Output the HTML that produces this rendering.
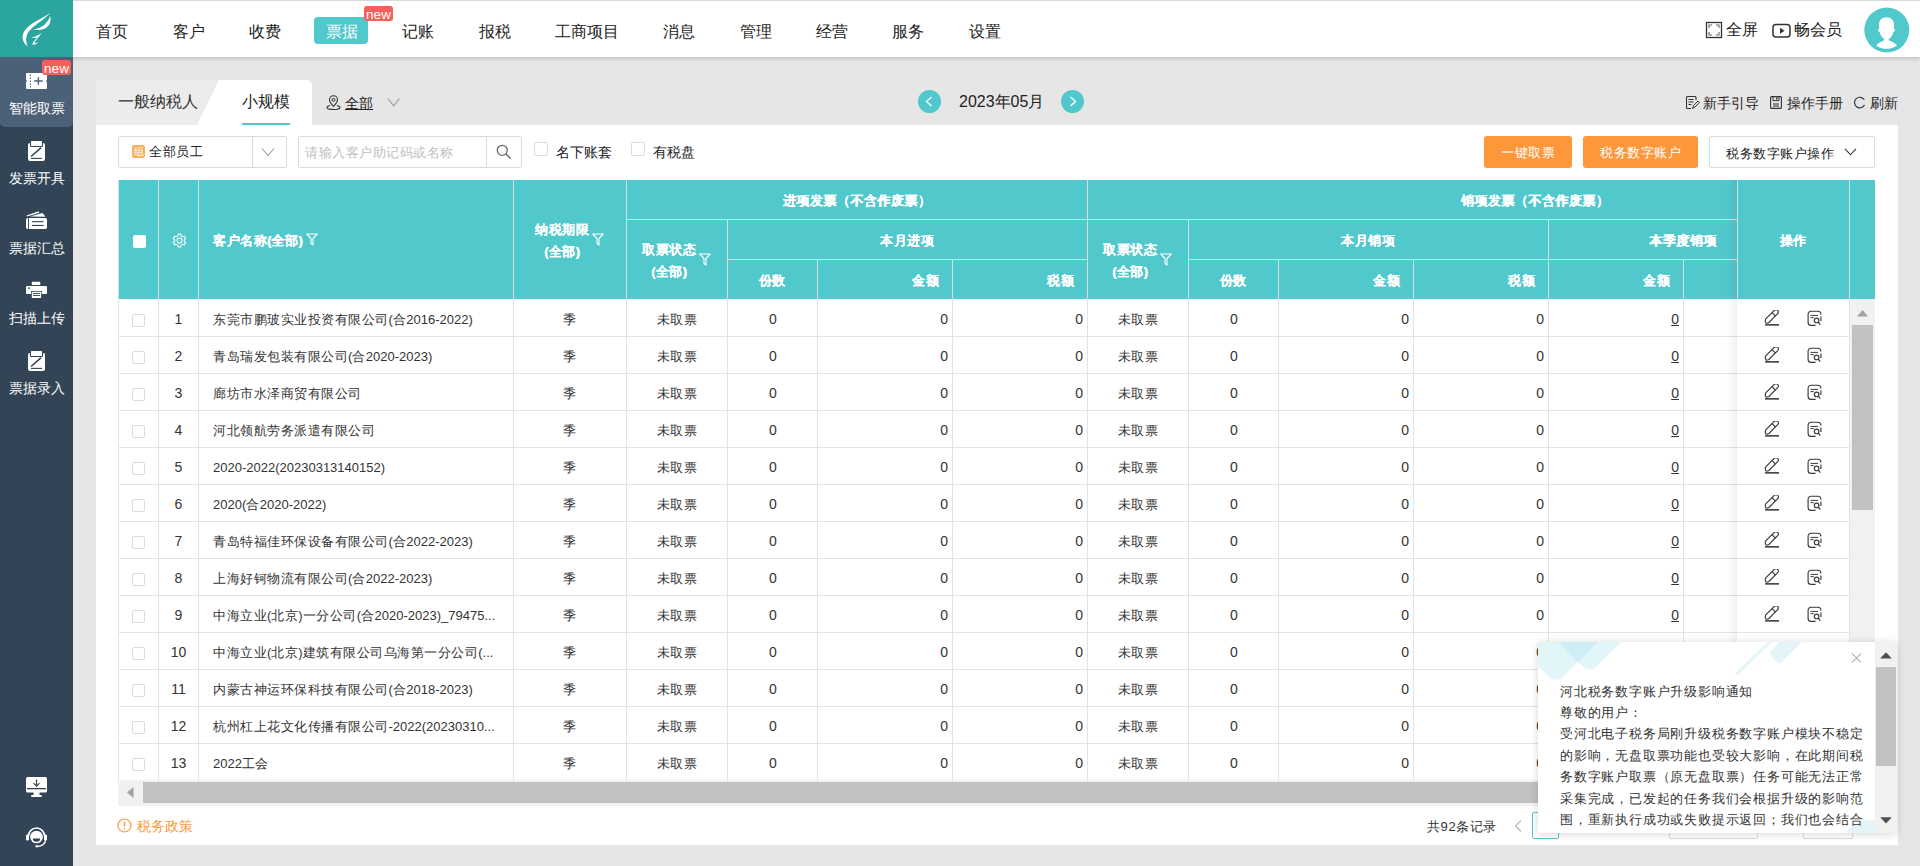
<!DOCTYPE html><html><head><meta charset="utf-8"><style>
*{box-sizing:border-box;margin:0;padding:0}
html,body{width:1920px;height:866px;overflow:hidden;background:#e6e6e6;font-family:"Liberation Sans",sans-serif;color:#333}
.a{position:absolute}
.c{letter-spacing:0.5px}
#top{position:absolute;left:0;top:0;width:1920px;height:57px;background:#fff;border-top:1px solid #d9d9d9;box-shadow:0 2px 4px rgba(0,0,0,0.16);z-index:5}
#side{position:absolute;left:0;top:0;width:73px;height:866px;background:#324455;z-index:6}
#logo{position:absolute;left:0;top:0;width:73px;height:57px;background:#2aa59f}
.nav{position:absolute;top:19px;font-size:16px;line-height:24px;color:#222;white-space:nowrap}
.sitem{position:absolute;left:0;width:73px;height:70px;color:#fff;font-size:14px;text-align:center}
.sitem .t{position:absolute;left:0;width:73px;top:43px;line-height:16px;font-size:14px}
.badge{position:absolute;background:#f7605a;color:#fff;font-size:13.5px;line-height:17.5px;height:15px;border-radius:3px;text-align:center;overflow:hidden}
.hd{position:absolute;background:#50c8cc;color:#fff;font-weight:bold;font-size:13px;text-shadow:0.45px 0 0 #fff}
.hl{position:absolute;background:#d9dddd}
.bl{position:absolute;background:#e3e3e3}
.cell{position:absolute;font-size:13px;line-height:16px;white-space:nowrap;color:#333}
.chk{position:absolute;width:13px;height:13px;border:1px solid #dcdcdc;border-radius:2px;background:#fff}
</style></head><body>
<div id="top">
<div class="nav" style="left:96px">首页</div>
<div class="nav" style="left:172.5px">客户</div>
<div class="nav" style="left:249px">收费</div>
<div class="a" style="left:314px;top:16px;width:54px;height:27px;background:#50c8cc;border-radius:4px"></div>
<div class="nav" style="left:325.5px;color:#fff">票据</div>
<div class="badge" style="left:364px;top:5px;width:29px">new</div>
<div class="nav" style="left:402px">记账</div>
<div class="nav" style="left:478.5px">报税</div>
<div class="nav" style="left:555px">工商项目</div>
<div class="nav" style="left:662.5px">消息</div>
<div class="nav" style="left:739.5px">管理</div>
<div class="nav" style="left:815.5px">经营</div>
<div class="nav" style="left:892px">服务</div>
<div class="nav" style="left:968.5px">设置</div>
<svg class="a" style="left:1705px;top:20px" width="18" height="18" viewBox="0 0 18 18"><rect x="1.5" y="1.5" width="15" height="15" fill="none" stroke="#333" stroke-width="1.3"/><path d="M4 7V4h3M11 4h3v3M14 11v3h-3M7 14H4v-3" fill="none" stroke="#666" stroke-width="1.1"/></svg>
<div class="nav" style="left:1726px;top:17px">全屏</div>
<svg class="a" style="left:1772px;top:22px" width="20" height="16" viewBox="0 0 20 16"><rect x="1" y="1.5" width="17" height="12.5" rx="3" fill="none" stroke="#333" stroke-width="1.5"/><path d="M8 4.8v6l4.6-3z" fill="#333"/></svg>
<div class="nav" style="left:1794px;top:17px">畅会员</div>
<svg class="a" style="left:1864px;top:5.5px" width="46" height="46" viewBox="0 0 46 46"><circle cx="22.8" cy="23" r="22.5" fill="#50c8cc"/><path d="M22.5 10.3C17.5 10.3 15 13.5 15 18C15 19.5 15.2 20.5 15.5 21.5C13.5 22 13.5 24 15.5 25C16.5 28.5 18.5 31 20.5 32.5L20.5 33.2C17 34.5 14.5 36 12.2 38.5C15 41 19 41.8 22.5 41.8C26 41.8 30 41 33 38.5C30.5 36 28 34.5 24.5 33.2L24.5 32.5C26.5 31 28.5 28.5 29.5 25C31.5 24 31.5 22 29.5 21.5C29.8 20.5 30 19.5 30 18C30 13.5 27.5 10.3 22.5 10.3Z" fill="#fff"/></svg>
</div>
<div id="side"><div id="logo">
<svg class="a" style="left:0;top:0" width="73" height="57" viewBox="0 0 73 57"><path d="M50.5 13C40 19.5 30.5 23 25.2 30C21 35.5 21.8 42 27.8 46.5C25.6 42 25.4 36.5 28.6 31.8C32.5 26 42.5 21 50.5 13Z" fill="#fff"/><path d="M50.3 16C52.3 25 45.8 31.5 33.5 29.8C43 27.5 47.5 23 50.3 16Z" fill="#fff"/><path d="M42 33C38.5 35.2 35 36.8 31 38C33.2 38.2 35.3 38 37.2 37.5C35 39.8 33.3 41.8 32 44.2C33.6 45.2 36.5 44.5 38 42.3C36.3 42.9 34.9 43.1 34.2 43C36.4 39.5 39.2 36.2 42 33Z" fill="#fff"/></svg>
</div>
<div class="a" style="left:0;top:57px;width:73px;height:70px;background:#4b6178;border-radius:0 0 5px 5px"></div>
<div class="sitem" style="top:57px"><svg class="a" style="left:26px;top:16px" width="21" height="16" viewBox="0 0 21 16"><path d="M1 0h19a1 1 0 0 1 1 1v5.8a1.3 1.3 0 0 0 0 2.4V15a1 1 0 0 1-1 1H1a1 1 0 0 1-1-1V9.2a1.3 1.3 0 0 0 0-2.4V1a1 1 0 0 1 1-1z" fill="#fff"/><path d="M4.4 1.5v1.6M4.4 4.5v1.6M4.4 7.5v1.6M4.4 10.5v1.6M4.4 13.2v1.4" stroke="#4b6178" stroke-width="1.1"/><path d="M12.4 4.3v7.4M8.2 8h8.5" stroke="#4b6178" stroke-width="1.4"/></svg><div class="t">智能取票</div></div>
<div class="sitem" style="top:127px"><svg class="a" style="left:27px;top:13px" width="19" height="22" viewBox="0 0 19 22"><rect x="1" y="3" width="17" height="18" rx="2" fill="#fff"/><rect x="3.5" y="0.5" width="12" height="6" rx="0.8" fill="#fff" stroke="#324455" stroke-width="1.1"/><path d="M4.6 16l9-7.8" stroke="#324455" stroke-width="1.6" stroke-linecap="round"/><path d="M4 18.4h11" stroke="#324455" stroke-width="1.1"/></svg><div class="t">发票开具</div></div>
<div class="sitem" style="top:197px"><svg class="a" style="left:25px;top:14px" width="23" height="18" viewBox="0 0 23 18"><path d="M1.4 4.4L13.6 0.3l0.8 1.4L2.2 5.4z" fill="#fff"/><path d="M5 5.6L17.5 2l3 3.8z" fill="#fff"/><rect x="1" y="7" width="21" height="10.9" rx="1.6" fill="#fff"/><rect x="3" y="7" width="0.9" height="11" fill="#324455"/><rect x="7" y="10.1" width="11.6" height="1.1" fill="#324455"/><rect x="7" y="13.9" width="11.6" height="1.1" fill="#324455"/></svg><div class="t">票据汇总</div></div>
<div class="sitem" style="top:267px"><svg class="a" style="left:25px;top:14px" width="23" height="18" viewBox="0 0 23 18"><rect x="6.8" y="0.8" width="8.5" height="3.2" rx="0.6" fill="#fff"/><path d="M2 4.9h19a1 1 0 0 1 1 1V12a1 1 0 0 1-1 1h-4.2V10H6.1v3H2a1 1 0 0 1-1-1V5.9a1 1 0 0 1 1-1z" fill="#fff"/><rect x="6.8" y="10.8" width="9.3" height="6.2" rx="0.6" fill="#fff"/><rect x="8" y="12.1" width="7" height="0.9" fill="#324455"/><rect x="8" y="14" width="7" height="0.9" fill="#324455"/><rect x="3.2" y="6.4" width="1.6" height="1.6" fill="#324455"/></svg><div class="t">扫描上传</div></div>
<div class="sitem" style="top:337px"><svg class="a" style="left:27px;top:13px" width="19" height="22" viewBox="0 0 19 22"><rect x="1" y="3" width="17" height="18" rx="2" fill="#fff"/><rect x="3.5" y="0.5" width="12" height="6" rx="0.8" fill="#fff" stroke="#324455" stroke-width="1.1"/><path d="M4.6 16l9-7.8" stroke="#324455" stroke-width="1.6" stroke-linecap="round"/><path d="M4 18.4h11" stroke="#324455" stroke-width="1.1"/></svg><div class="t">票据录入</div></div>
<div class="badge" style="left:42px;top:60px;width:29px">new</div>
<svg class="a" style="left:25px;top:776px" width="23" height="22" viewBox="0 0 23 22"><rect x="1" y="1" width="21" height="15.5" rx="1.5" fill="#fff"/><rect x="8.5" y="16" width="6" height="3" fill="#fff"/><rect x="6" y="19" width="11" height="2" rx="1" fill="#fff"/><path d="M11.5 3.5v6.5M8.5 7.2l3 3 3-3" fill="none" stroke="#324455" stroke-width="1.2"/><rect x="2" y="12" width="19" height="1.3" fill="#324455"/></svg>
<svg class="a" style="left:25px;top:826px" width="23" height="22" viewBox="0 0 23 22"><path d="M3.5 10a8 8 0 0 1 16 0" fill="none" stroke="#fff" stroke-width="1.6"/><rect x="1" y="8.5" width="3" height="6" rx="1.2" fill="#fff"/><rect x="19" y="8.5" width="3" height="6" rx="1.2" fill="#fff"/><circle cx="11.5" cy="11" r="6.3" fill="#fff"/><path d="M7.8 12.5h7.4a3.7 3.2 0 0 1-7.4 0z" fill="#324455"/><path d="M20.5 14c0 3.5-3.5 6.5-8 6.5" fill="none" stroke="#fff" stroke-width="1.4"/><circle cx="11.8" cy="20.3" r="1.3" fill="#fff"/></svg>
</div>
<div class="a" style="left:96px;top:80px;width:216px;height:45px;background:#ececec;border-radius:5px 5px 0 0"></div>
<svg class="a" style="left:196px;top:80px" width="117" height="45" viewBox="0 0 117 45"><path d="M23 0H111a5 5 0 0 1 5 5V45H1z" fill="#fff"/></svg>
<div class="a" style="left:118px;top:90px;font-size:16px;line-height:24px;color:#333">一般纳税人</div>
<div class="a" style="left:242px;top:90px;font-size:16px;line-height:24px;color:#222">小规模</div>
<div class="a" style="left:242px;top:123px;width:48px;height:2px;background:#50c8cc"></div>
<svg class="a" style="left:326px;top:95px" width="16" height="15" viewBox="0 0 16 15"><path d="M7.5 11.5C5 8.8 3.5 6.8 3.5 4.8a4 4 0 0 1 8 0c0 2-1.5 4-4 6.7z" fill="none" stroke="#333" stroke-width="1.1"/><circle cx="7.5" cy="4.8" r="1.5" fill="none" stroke="#333" stroke-width="1"/><path d="M4 10.5C2 11 1 11.7 1 12.5c0 1.2 3 2 6.5 2s6.5-0.8 6.5-2c0-0.8-1-1.5-3-2" fill="none" stroke="#333" stroke-width="1.1"/></svg>
<div class="a" style="left:345px;top:94px;font-size:14px;line-height:18px;color:#222;text-decoration:underline">全部</div>
<svg class="a" style="left:387px;top:97px" width="14" height="11" viewBox="0 0 14 11"><path d="M1 1.5l5.7 7.5 5.7-7.5" fill="none" stroke="#999" stroke-width="1.1"/></svg>
<div class="a" style="left:918px;top:90px;width:23px;height:23px;border-radius:50%;background:#50c8cc"></div>
<svg class="a" style="left:918px;top:90px" width="23" height="23" viewBox="0 0 23 23"><path d="M13.5 7l-5 4.5 5 4.5" fill="none" stroke="#fff" stroke-width="1.3"/></svg>
<div class="a" style="left:959px;top:90px;font-size:16px;line-height:24px;color:#222">2023年05月</div>
<div class="a" style="left:1061px;top:90px;width:23px;height:23px;border-radius:50%;background:#50c8cc"></div>
<svg class="a" style="left:1061px;top:90px" width="23" height="23" viewBox="0 0 23 23"><path d="M9.5 7l5 4.5-5 4.5" fill="none" stroke="#fff" stroke-width="1.3"/></svg>
<svg class="a" style="left:1686px;top:96px" width="14" height="13" viewBox="0 0 14 13"><path d="M10 4V1.5a1 1 0 0 0-1-1H1.5a1 1 0 0 0-1 1v10a1 1 0 0 0 1 1H5" fill="none" stroke="#333" stroke-width="1.1"/><path d="M2.5 3.5h5M2.5 6h5M2.5 8.5h3" stroke="#333" stroke-width="1"/><path d="M6.5 12.5l1-3 4.5-4.5 1.5 1.5-4.5 4.5z" fill="none" stroke="#333" stroke-width="1"/></svg>
<div class="a" style="left:1703px;top:94px;font-size:14px;line-height:18px;color:#222">新手引导</div>
<svg class="a" style="left:1770px;top:96px" width="12" height="13" viewBox="0 0 12 13"><rect x="0.6" y="0.6" width="10.8" height="11.8" rx="1" fill="none" stroke="#333" stroke-width="1.1"/><path d="M3 0.6v4h6v-4" fill="none" stroke="#333" stroke-width="1"/><path d="M3 8h6M3 10h6" stroke="#333" stroke-width="1"/><rect x="6" y="1.5" width="1.5" height="2" fill="#333"/></svg>
<div class="a" style="left:1787px;top:94px;font-size:14px;line-height:18px;color:#222">操作手册</div>
<svg class="a" style="left:1853px;top:96px" width="13" height="13" viewBox="0 0 13 13"><path d="M11.3 3.8A5.3 5.3 0 1 0 11.5 9" fill="none" stroke="#333" stroke-width="1.2"/></svg>
<div class="a" style="left:1870px;top:94px;font-size:14px;line-height:18px;color:#222">刷新</div>
<div class="a" style="left:96px;top:125px;width:1802px;height:720px;background:#fff"></div>
<div class="a" style="left:118px;top:136px;width:169px;height:32px;border:1px solid #dcdcdc;border-radius:2px;background:#fff"></div>
<div class="a" style="left:252px;top:136px;width:1px;height:32px;background:#dcdcdc"></div>
<div class="a" style="left:132px;top:145px;width:13px;height:13px;background:#f5b35a;border-radius:2px;color:#fff;font-size:10px;line-height:13px;text-align:center">组</div>
<div class="a" style="left:149px;top:143px;font-size:13px;line-height:18px;color:#222"><span class="c">全部员工</span></div>
<svg class="a" style="left:261px;top:147px" width="14" height="10" viewBox="0 0 14 10"><path d="M1 1.5l6 7 6-7" fill="none" stroke="#999" stroke-width="1.1"/></svg>
<div class="a" style="left:298px;top:136px;width:224px;height:32px;border:1px solid #dcdcdc;border-radius:2px;background:#fff"></div>
<div class="a" style="left:486px;top:136px;width:1px;height:32px;background:#dcdcdc"></div>
<div class="a" style="left:305px;top:144px;font-size:13px;line-height:18px;color:#c0c0c0"><span class="c">请输入客户助记码或名称</span></div>
<svg class="a" style="left:496px;top:144px" width="16" height="16" viewBox="0 0 16 16"><circle cx="6.3" cy="6.3" r="5" fill="none" stroke="#666" stroke-width="1.3"/><path d="M10 10l4.5 4.5" stroke="#666" stroke-width="1.4"/></svg>
<div class="chk" style="left:534px;top:142px;width:14px;height:14px"></div>
<div class="a" style="left:556px;top:143px;font-size:14px;line-height:18px;color:#222">名下账套</div>
<div class="chk" style="left:631px;top:142px;width:14px;height:14px"></div>
<div class="a" style="left:653px;top:143px;font-size:14px;line-height:18px;color:#222">有税盘</div>
<div class="a" style="left:1484px;top:136px;width:88px;height:32px;background:#fd9739;border-radius:3px"></div>
<div class="a" style="left:1501px;top:144px;font-size:13px;line-height:18px;color:#fff"><span class="c">一键取票</span></div>
<div class="a" style="left:1583px;top:136px;width:115px;height:32px;background:#fd9739;border-radius:3px"></div>
<div class="a" style="left:1600px;top:144px;font-size:13px;line-height:18px;color:#fff"><span class="c">税务数字账户</span></div>
<div class="a" style="left:1709px;top:136px;width:166px;height:32px;border:1px solid #dcdcdc;border-radius:2px;background:#fff"></div>
<div class="a" style="left:1726px;top:145px;font-size:13px;line-height:18px;color:#222"><span class="c">税务数字账户操作</span></div>
<svg class="a" style="left:1844px;top:148px" width="13" height="8" viewBox="0 0 13 8"><path d="M1 0.8l5.5 6 5.5-6" fill="none" stroke="#333" stroke-width="1.1"/></svg>
<div class="hd" style="left:118px;top:180px;width:1757px;height:119px"></div>
<div class="hl" style="left:158px;top:180px;width:1px;height:119px"></div>
<div class="hl" style="left:198px;top:180px;width:1px;height:119px"></div>
<div class="hl" style="left:513px;top:180px;width:1px;height:119px"></div>
<div class="hl" style="left:626px;top:180px;width:1px;height:119px"></div>
<div class="hl" style="left:1087px;top:180px;width:1px;height:119px"></div>
<div class="hl" style="left:626px;top:219px;width:1111px;height:1px"></div>
<div class="hl" style="left:727px;top:259px;width:360px;height:1px"></div>
<div class="hl" style="left:1188px;top:259px;width:549px;height:1px"></div>
<div class="hl" style="left:727px;top:220px;width:1px;height:79px"></div>
<div class="hl" style="left:1188px;top:220px;width:1px;height:79px"></div>
<div class="hl" style="left:817px;top:260px;width:1px;height:39px"></div>
<div class="hl" style="left:952px;top:260px;width:1px;height:39px"></div>
<div class="hl" style="left:1278px;top:260px;width:1px;height:39px"></div>
<div class="hl" style="left:1413px;top:260px;width:1px;height:39px"></div>
<div class="hl" style="left:1683px;top:260px;width:1px;height:39px"></div>
<div class="hl" style="left:1548px;top:220px;width:1px;height:79px"></div>
<div class="hl" style="left:118px;top:180px;width:1px;height:119px"></div>
<div class="a" style="left:133px;top:235px;width:13px;height:13px;background:#fff;border-radius:2px"></div>
<svg class="a" style="left:171.5px;top:232.5px" width="15" height="15" viewBox="0 0 15 15"><path d="M5.90 2.87 L6.15 1.14 L8.85 1.14 L9.10 2.87 L10.71 3.80 L12.33 3.15 L13.68 5.49 L12.31 6.57 L12.31 8.43 L13.68 9.51 L12.33 11.85 L10.71 11.20 L9.10 12.13 L8.85 13.86 L6.15 13.86 L5.90 12.13 L4.29 11.20 L2.67 11.85 L1.32 9.51 L2.69 8.43 L2.69 6.57 L1.32 5.49 L2.67 3.15 L4.29 3.80Z" fill="none" stroke="#fff" stroke-width="1.05" stroke-linejoin="round"/><circle cx="7.5" cy="7.5" r="2.5" fill="none" stroke="#fff" stroke-width="1.05"/></svg>
<div class="hd a" style="left:213px;top:233px;line-height:16px;background:none;white-space:nowrap"><span class="c">客户名称</span>(<span class="c">全部</span>)</div>
<svg class="a" style="left:306px;top:233px" width="12" height="13" viewBox="0 0 12 13"><path d="M0.8 1h10.4L7 5.5v6.5L5 10.5V5.5z" fill="none" stroke="#fff" stroke-width="1.1" stroke-linejoin="round"/></svg>
<div class="hd a" style="left:412px;width:300px;top:222px;line-height:16px;text-align:center;background:none"><span class="c">纳税期限</span></div>
<div class="hd a" style="left:412px;width:300px;top:244px;line-height:16px;text-align:center;background:none">(<span class="c">全部</span>)</div>
<svg class="a" style="left:592px;top:233px" width="12" height="13" viewBox="0 0 12 13"><path d="M0.8 1h10.4L7 5.5v6.5L5 10.5V5.5z" fill="none" stroke="#fff" stroke-width="1.1" stroke-linejoin="round"/></svg>
<div class="hd a" style="left:519px;width:300px;top:242px;line-height:16px;text-align:center;background:none"><span class="c">取票状态</span></div>
<div class="hd a" style="left:519px;width:300px;top:264px;line-height:16px;text-align:center;background:none">(<span class="c">全部</span>)</div>
<svg class="a" style="left:699px;top:253px" width="12" height="13" viewBox="0 0 12 13"><path d="M0.8 1h10.4L7 5.5v6.5L5 10.5V5.5z" fill="none" stroke="#fff" stroke-width="1.1" stroke-linejoin="round"/></svg>
<div class="hd a" style="left:707px;width:300px;top:193px;line-height:16px;text-align:center;background:none"><span class="c">进项发票（不含作废票）</span></div>
<div class="hd a" style="left:757px;width:300px;top:233px;line-height:16px;text-align:center;background:none"><span class="c">本月进项</span></div>
<div class="hd a" style="left:622px;width:300px;top:273px;line-height:16px;text-align:center;background:none"><span class="c">份数</span></div>
<div class="hd a" style="left:639px;width:300px;top:273px;line-height:16px;text-align:right;background:none"><span class="c">金额</span></div>
<div class="hd a" style="left:774px;width:300px;top:273px;line-height:16px;text-align:right;background:none"><span class="c">税额</span></div>
<div class="hd a" style="left:980px;width:300px;top:242px;line-height:16px;text-align:center;background:none"><span class="c">取票状态</span></div>
<div class="hd a" style="left:980px;width:300px;top:264px;line-height:16px;text-align:center;background:none">(<span class="c">全部</span>)</div>
<svg class="a" style="left:1160px;top:253px" width="12" height="13" viewBox="0 0 12 13"><path d="M0.8 1h10.4L7 5.5v6.5L5 10.5V5.5z" fill="none" stroke="#fff" stroke-width="1.1" stroke-linejoin="round"/></svg>
<div class="hd a" style="left:1385px;width:300px;top:193px;line-height:16px;text-align:center;background:none"><span class="c">销项发票（不含作废票）</span></div>
<div class="hd a" style="left:1218px;width:300px;top:233px;line-height:16px;text-align:center;background:none"><span class="c">本月销项</span></div>
<div class="hd a" style="left:1083px;width:300px;top:273px;line-height:16px;text-align:center;background:none"><span class="c">份数</span></div>
<div class="hd a" style="left:1100px;width:300px;top:273px;line-height:16px;text-align:right;background:none"><span class="c">金额</span></div>
<div class="hd a" style="left:1235px;width:300px;top:273px;line-height:16px;text-align:right;background:none"><span class="c">税额</span></div>
<div class="hd a" style="left:1533px;width:300px;top:233px;line-height:16px;text-align:center;background:none"><span class="c">本季度销项</span></div>
<div class="hd a" style="left:1370px;width:300px;top:273px;line-height:16px;text-align:right;background:none"><span class="c">金额</span></div>
<div class="a" style="left:1727px;top:180px;width:10px;height:119px;background:linear-gradient(to right,rgba(0,0,0,0),rgba(0,0,0,0.05))"></div>
<div class="hl" style="left:1737px;top:180px;width:1px;height:119px"></div>
<div class="hd a" style="left:1643px;width:300px;top:233px;line-height:16px;text-align:center;background:none"><span class="c">操作</span></div>
<div class="hl" style="left:1849px;top:180px;width:1px;height:119px"></div>
<div class="a" style="left:118px;top:299px;width:1732px;height:481px;overflow:hidden">
<div class="chk" style="left:14px;top:15px"></div>
<div class="cell" style="left:-39.5px;width:200px;text-align:center;top:13px;font-size:14px;margin-top:-1px">1</div>
<div class="cell" style="left:95px;top:13px"><span class="c">东莞市鹏玻实业投资有限公司</span>(<span class="c">合</span>2016-2022)</div>
<div class="cell" style="left:352px;width:200px;text-align:center;top:13px"><span class="c">季</span></div>
<div class="cell" style="left:459px;width:200px;text-align:center;top:13px"><span class="c">未取票</span></div>
<div class="cell" style="left:555px;width:200px;text-align:center;top:13px;font-size:14px;margin-top:-1px">0</div>
<div class="cell" style="left:630px;width:200px;text-align:right;top:13px;font-size:14px;margin-top:-1px">0</div>
<div class="cell" style="left:765px;width:200px;text-align:right;top:13px;font-size:14px;margin-top:-1px">0</div>
<div class="cell" style="left:920px;width:200px;text-align:center;top:13px"><span class="c">未取票</span></div>
<div class="cell" style="left:1016px;width:200px;text-align:center;top:13px;font-size:14px;margin-top:-1px">0</div>
<div class="cell" style="left:1091px;width:200px;text-align:right;top:13px;font-size:14px;margin-top:-1px">0</div>
<div class="cell" style="left:1226px;width:200px;text-align:right;top:13px;font-size:14px;margin-top:-1px">0</div>
<div class="cell" style="left:1361px;width:200px;text-align:right;top:13px;font-size:14px;margin-top:-1px;text-decoration:underline">0</div>
<div class="bl" style="left:0;top:37px;width:1732px;height:1px"></div>
<div class="chk" style="left:14px;top:52px"></div>
<div class="cell" style="left:-39.5px;width:200px;text-align:center;top:50px;font-size:14px;margin-top:-1px">2</div>
<div class="cell" style="left:95px;top:50px"><span class="c">青岛瑞发包装有限公司</span>(<span class="c">合</span>2020-2023)</div>
<div class="cell" style="left:352px;width:200px;text-align:center;top:50px"><span class="c">季</span></div>
<div class="cell" style="left:459px;width:200px;text-align:center;top:50px"><span class="c">未取票</span></div>
<div class="cell" style="left:555px;width:200px;text-align:center;top:50px;font-size:14px;margin-top:-1px">0</div>
<div class="cell" style="left:630px;width:200px;text-align:right;top:50px;font-size:14px;margin-top:-1px">0</div>
<div class="cell" style="left:765px;width:200px;text-align:right;top:50px;font-size:14px;margin-top:-1px">0</div>
<div class="cell" style="left:920px;width:200px;text-align:center;top:50px"><span class="c">未取票</span></div>
<div class="cell" style="left:1016px;width:200px;text-align:center;top:50px;font-size:14px;margin-top:-1px">0</div>
<div class="cell" style="left:1091px;width:200px;text-align:right;top:50px;font-size:14px;margin-top:-1px">0</div>
<div class="cell" style="left:1226px;width:200px;text-align:right;top:50px;font-size:14px;margin-top:-1px">0</div>
<div class="cell" style="left:1361px;width:200px;text-align:right;top:50px;font-size:14px;margin-top:-1px;text-decoration:underline">0</div>
<div class="bl" style="left:0;top:74px;width:1732px;height:1px"></div>
<div class="chk" style="left:14px;top:89px"></div>
<div class="cell" style="left:-39.5px;width:200px;text-align:center;top:87px;font-size:14px;margin-top:-1px">3</div>
<div class="cell" style="left:95px;top:87px"><span class="c">廊坊市水泽商贸有限公司</span></div>
<div class="cell" style="left:352px;width:200px;text-align:center;top:87px"><span class="c">季</span></div>
<div class="cell" style="left:459px;width:200px;text-align:center;top:87px"><span class="c">未取票</span></div>
<div class="cell" style="left:555px;width:200px;text-align:center;top:87px;font-size:14px;margin-top:-1px">0</div>
<div class="cell" style="left:630px;width:200px;text-align:right;top:87px;font-size:14px;margin-top:-1px">0</div>
<div class="cell" style="left:765px;width:200px;text-align:right;top:87px;font-size:14px;margin-top:-1px">0</div>
<div class="cell" style="left:920px;width:200px;text-align:center;top:87px"><span class="c">未取票</span></div>
<div class="cell" style="left:1016px;width:200px;text-align:center;top:87px;font-size:14px;margin-top:-1px">0</div>
<div class="cell" style="left:1091px;width:200px;text-align:right;top:87px;font-size:14px;margin-top:-1px">0</div>
<div class="cell" style="left:1226px;width:200px;text-align:right;top:87px;font-size:14px;margin-top:-1px">0</div>
<div class="cell" style="left:1361px;width:200px;text-align:right;top:87px;font-size:14px;margin-top:-1px;text-decoration:underline">0</div>
<div class="bl" style="left:0;top:111px;width:1732px;height:1px"></div>
<div class="chk" style="left:14px;top:126px"></div>
<div class="cell" style="left:-39.5px;width:200px;text-align:center;top:124px;font-size:14px;margin-top:-1px">4</div>
<div class="cell" style="left:95px;top:124px"><span class="c">河北领航劳务派遣有限公司</span></div>
<div class="cell" style="left:352px;width:200px;text-align:center;top:124px"><span class="c">季</span></div>
<div class="cell" style="left:459px;width:200px;text-align:center;top:124px"><span class="c">未取票</span></div>
<div class="cell" style="left:555px;width:200px;text-align:center;top:124px;font-size:14px;margin-top:-1px">0</div>
<div class="cell" style="left:630px;width:200px;text-align:right;top:124px;font-size:14px;margin-top:-1px">0</div>
<div class="cell" style="left:765px;width:200px;text-align:right;top:124px;font-size:14px;margin-top:-1px">0</div>
<div class="cell" style="left:920px;width:200px;text-align:center;top:124px"><span class="c">未取票</span></div>
<div class="cell" style="left:1016px;width:200px;text-align:center;top:124px;font-size:14px;margin-top:-1px">0</div>
<div class="cell" style="left:1091px;width:200px;text-align:right;top:124px;font-size:14px;margin-top:-1px">0</div>
<div class="cell" style="left:1226px;width:200px;text-align:right;top:124px;font-size:14px;margin-top:-1px">0</div>
<div class="cell" style="left:1361px;width:200px;text-align:right;top:124px;font-size:14px;margin-top:-1px;text-decoration:underline">0</div>
<div class="bl" style="left:0;top:148px;width:1732px;height:1px"></div>
<div class="chk" style="left:14px;top:163px"></div>
<div class="cell" style="left:-39.5px;width:200px;text-align:center;top:161px;font-size:14px;margin-top:-1px">5</div>
<div class="cell" style="left:95px;top:161px">2020-2022(20230313140152)</div>
<div class="cell" style="left:352px;width:200px;text-align:center;top:161px"><span class="c">季</span></div>
<div class="cell" style="left:459px;width:200px;text-align:center;top:161px"><span class="c">未取票</span></div>
<div class="cell" style="left:555px;width:200px;text-align:center;top:161px;font-size:14px;margin-top:-1px">0</div>
<div class="cell" style="left:630px;width:200px;text-align:right;top:161px;font-size:14px;margin-top:-1px">0</div>
<div class="cell" style="left:765px;width:200px;text-align:right;top:161px;font-size:14px;margin-top:-1px">0</div>
<div class="cell" style="left:920px;width:200px;text-align:center;top:161px"><span class="c">未取票</span></div>
<div class="cell" style="left:1016px;width:200px;text-align:center;top:161px;font-size:14px;margin-top:-1px">0</div>
<div class="cell" style="left:1091px;width:200px;text-align:right;top:161px;font-size:14px;margin-top:-1px">0</div>
<div class="cell" style="left:1226px;width:200px;text-align:right;top:161px;font-size:14px;margin-top:-1px">0</div>
<div class="cell" style="left:1361px;width:200px;text-align:right;top:161px;font-size:14px;margin-top:-1px;text-decoration:underline">0</div>
<div class="bl" style="left:0;top:185px;width:1732px;height:1px"></div>
<div class="chk" style="left:14px;top:200px"></div>
<div class="cell" style="left:-39.5px;width:200px;text-align:center;top:198px;font-size:14px;margin-top:-1px">6</div>
<div class="cell" style="left:95px;top:198px">2020(<span class="c">合</span>2020-2022)</div>
<div class="cell" style="left:352px;width:200px;text-align:center;top:198px"><span class="c">季</span></div>
<div class="cell" style="left:459px;width:200px;text-align:center;top:198px"><span class="c">未取票</span></div>
<div class="cell" style="left:555px;width:200px;text-align:center;top:198px;font-size:14px;margin-top:-1px">0</div>
<div class="cell" style="left:630px;width:200px;text-align:right;top:198px;font-size:14px;margin-top:-1px">0</div>
<div class="cell" style="left:765px;width:200px;text-align:right;top:198px;font-size:14px;margin-top:-1px">0</div>
<div class="cell" style="left:920px;width:200px;text-align:center;top:198px"><span class="c">未取票</span></div>
<div class="cell" style="left:1016px;width:200px;text-align:center;top:198px;font-size:14px;margin-top:-1px">0</div>
<div class="cell" style="left:1091px;width:200px;text-align:right;top:198px;font-size:14px;margin-top:-1px">0</div>
<div class="cell" style="left:1226px;width:200px;text-align:right;top:198px;font-size:14px;margin-top:-1px">0</div>
<div class="cell" style="left:1361px;width:200px;text-align:right;top:198px;font-size:14px;margin-top:-1px;text-decoration:underline">0</div>
<div class="bl" style="left:0;top:222px;width:1732px;height:1px"></div>
<div class="chk" style="left:14px;top:237px"></div>
<div class="cell" style="left:-39.5px;width:200px;text-align:center;top:235px;font-size:14px;margin-top:-1px">7</div>
<div class="cell" style="left:95px;top:235px"><span class="c">青岛特福佳环保设备有限公司</span>(<span class="c">合</span>2022-2023)</div>
<div class="cell" style="left:352px;width:200px;text-align:center;top:235px"><span class="c">季</span></div>
<div class="cell" style="left:459px;width:200px;text-align:center;top:235px"><span class="c">未取票</span></div>
<div class="cell" style="left:555px;width:200px;text-align:center;top:235px;font-size:14px;margin-top:-1px">0</div>
<div class="cell" style="left:630px;width:200px;text-align:right;top:235px;font-size:14px;margin-top:-1px">0</div>
<div class="cell" style="left:765px;width:200px;text-align:right;top:235px;font-size:14px;margin-top:-1px">0</div>
<div class="cell" style="left:920px;width:200px;text-align:center;top:235px"><span class="c">未取票</span></div>
<div class="cell" style="left:1016px;width:200px;text-align:center;top:235px;font-size:14px;margin-top:-1px">0</div>
<div class="cell" style="left:1091px;width:200px;text-align:right;top:235px;font-size:14px;margin-top:-1px">0</div>
<div class="cell" style="left:1226px;width:200px;text-align:right;top:235px;font-size:14px;margin-top:-1px">0</div>
<div class="cell" style="left:1361px;width:200px;text-align:right;top:235px;font-size:14px;margin-top:-1px;text-decoration:underline">0</div>
<div class="bl" style="left:0;top:259px;width:1732px;height:1px"></div>
<div class="chk" style="left:14px;top:274px"></div>
<div class="cell" style="left:-39.5px;width:200px;text-align:center;top:272px;font-size:14px;margin-top:-1px">8</div>
<div class="cell" style="left:95px;top:272px"><span class="c">上海好钶物流有限公司</span>(<span class="c">合</span>2022-2023)</div>
<div class="cell" style="left:352px;width:200px;text-align:center;top:272px"><span class="c">季</span></div>
<div class="cell" style="left:459px;width:200px;text-align:center;top:272px"><span class="c">未取票</span></div>
<div class="cell" style="left:555px;width:200px;text-align:center;top:272px;font-size:14px;margin-top:-1px">0</div>
<div class="cell" style="left:630px;width:200px;text-align:right;top:272px;font-size:14px;margin-top:-1px">0</div>
<div class="cell" style="left:765px;width:200px;text-align:right;top:272px;font-size:14px;margin-top:-1px">0</div>
<div class="cell" style="left:920px;width:200px;text-align:center;top:272px"><span class="c">未取票</span></div>
<div class="cell" style="left:1016px;width:200px;text-align:center;top:272px;font-size:14px;margin-top:-1px">0</div>
<div class="cell" style="left:1091px;width:200px;text-align:right;top:272px;font-size:14px;margin-top:-1px">0</div>
<div class="cell" style="left:1226px;width:200px;text-align:right;top:272px;font-size:14px;margin-top:-1px">0</div>
<div class="cell" style="left:1361px;width:200px;text-align:right;top:272px;font-size:14px;margin-top:-1px;text-decoration:underline">0</div>
<div class="bl" style="left:0;top:296px;width:1732px;height:1px"></div>
<div class="chk" style="left:14px;top:311px"></div>
<div class="cell" style="left:-39.5px;width:200px;text-align:center;top:309px;font-size:14px;margin-top:-1px">9</div>
<div class="cell" style="left:95px;top:309px"><span class="c">中海立业</span>(<span class="c">北京</span>)<span class="c">一分公司</span>(<span class="c">合</span>2020-2023)_79475...</div>
<div class="cell" style="left:352px;width:200px;text-align:center;top:309px"><span class="c">季</span></div>
<div class="cell" style="left:459px;width:200px;text-align:center;top:309px"><span class="c">未取票</span></div>
<div class="cell" style="left:555px;width:200px;text-align:center;top:309px;font-size:14px;margin-top:-1px">0</div>
<div class="cell" style="left:630px;width:200px;text-align:right;top:309px;font-size:14px;margin-top:-1px">0</div>
<div class="cell" style="left:765px;width:200px;text-align:right;top:309px;font-size:14px;margin-top:-1px">0</div>
<div class="cell" style="left:920px;width:200px;text-align:center;top:309px"><span class="c">未取票</span></div>
<div class="cell" style="left:1016px;width:200px;text-align:center;top:309px;font-size:14px;margin-top:-1px">0</div>
<div class="cell" style="left:1091px;width:200px;text-align:right;top:309px;font-size:14px;margin-top:-1px">0</div>
<div class="cell" style="left:1226px;width:200px;text-align:right;top:309px;font-size:14px;margin-top:-1px">0</div>
<div class="cell" style="left:1361px;width:200px;text-align:right;top:309px;font-size:14px;margin-top:-1px;text-decoration:underline">0</div>
<div class="bl" style="left:0;top:333px;width:1732px;height:1px"></div>
<div class="chk" style="left:14px;top:348px"></div>
<div class="cell" style="left:-39.5px;width:200px;text-align:center;top:346px;font-size:14px;margin-top:-1px">10</div>
<div class="cell" style="left:95px;top:346px"><span class="c">中海立业</span>(<span class="c">北京</span>)<span class="c">建筑有限公司乌海第一分公司</span>(...</div>
<div class="cell" style="left:352px;width:200px;text-align:center;top:346px"><span class="c">季</span></div>
<div class="cell" style="left:459px;width:200px;text-align:center;top:346px"><span class="c">未取票</span></div>
<div class="cell" style="left:555px;width:200px;text-align:center;top:346px;font-size:14px;margin-top:-1px">0</div>
<div class="cell" style="left:630px;width:200px;text-align:right;top:346px;font-size:14px;margin-top:-1px">0</div>
<div class="cell" style="left:765px;width:200px;text-align:right;top:346px;font-size:14px;margin-top:-1px">0</div>
<div class="cell" style="left:920px;width:200px;text-align:center;top:346px"><span class="c">未取票</span></div>
<div class="cell" style="left:1016px;width:200px;text-align:center;top:346px;font-size:14px;margin-top:-1px">0</div>
<div class="cell" style="left:1091px;width:200px;text-align:right;top:346px;font-size:14px;margin-top:-1px">0</div>
<div class="cell" style="left:1226px;width:200px;text-align:right;top:346px;font-size:14px;margin-top:-1px">0</div>
<div class="cell" style="left:1361px;width:200px;text-align:right;top:346px;font-size:14px;margin-top:-1px;text-decoration:underline">0</div>
<div class="bl" style="left:0;top:370px;width:1732px;height:1px"></div>
<div class="chk" style="left:14px;top:385px"></div>
<div class="cell" style="left:-39.5px;width:200px;text-align:center;top:383px;font-size:14px;margin-top:-1px">11</div>
<div class="cell" style="left:95px;top:383px"><span class="c">内蒙古神运环保科技有限公司</span>(<span class="c">合</span>2018-2023)</div>
<div class="cell" style="left:352px;width:200px;text-align:center;top:383px"><span class="c">季</span></div>
<div class="cell" style="left:459px;width:200px;text-align:center;top:383px"><span class="c">未取票</span></div>
<div class="cell" style="left:555px;width:200px;text-align:center;top:383px;font-size:14px;margin-top:-1px">0</div>
<div class="cell" style="left:630px;width:200px;text-align:right;top:383px;font-size:14px;margin-top:-1px">0</div>
<div class="cell" style="left:765px;width:200px;text-align:right;top:383px;font-size:14px;margin-top:-1px">0</div>
<div class="cell" style="left:920px;width:200px;text-align:center;top:383px"><span class="c">未取票</span></div>
<div class="cell" style="left:1016px;width:200px;text-align:center;top:383px;font-size:14px;margin-top:-1px">0</div>
<div class="cell" style="left:1091px;width:200px;text-align:right;top:383px;font-size:14px;margin-top:-1px">0</div>
<div class="cell" style="left:1226px;width:200px;text-align:right;top:383px;font-size:14px;margin-top:-1px">0</div>
<div class="cell" style="left:1361px;width:200px;text-align:right;top:383px;font-size:14px;margin-top:-1px;text-decoration:underline">0</div>
<div class="bl" style="left:0;top:407px;width:1732px;height:1px"></div>
<div class="chk" style="left:14px;top:422px"></div>
<div class="cell" style="left:-39.5px;width:200px;text-align:center;top:420px;font-size:14px;margin-top:-1px">12</div>
<div class="cell" style="left:95px;top:420px"><span class="c">杭州杠上花文化传播有限公司</span>-2022(20230310...</div>
<div class="cell" style="left:352px;width:200px;text-align:center;top:420px"><span class="c">季</span></div>
<div class="cell" style="left:459px;width:200px;text-align:center;top:420px"><span class="c">未取票</span></div>
<div class="cell" style="left:555px;width:200px;text-align:center;top:420px;font-size:14px;margin-top:-1px">0</div>
<div class="cell" style="left:630px;width:200px;text-align:right;top:420px;font-size:14px;margin-top:-1px">0</div>
<div class="cell" style="left:765px;width:200px;text-align:right;top:420px;font-size:14px;margin-top:-1px">0</div>
<div class="cell" style="left:920px;width:200px;text-align:center;top:420px"><span class="c">未取票</span></div>
<div class="cell" style="left:1016px;width:200px;text-align:center;top:420px;font-size:14px;margin-top:-1px">0</div>
<div class="cell" style="left:1091px;width:200px;text-align:right;top:420px;font-size:14px;margin-top:-1px">0</div>
<div class="cell" style="left:1226px;width:200px;text-align:right;top:420px;font-size:14px;margin-top:-1px">0</div>
<div class="cell" style="left:1361px;width:200px;text-align:right;top:420px;font-size:14px;margin-top:-1px;text-decoration:underline">0</div>
<div class="bl" style="left:0;top:444px;width:1732px;height:1px"></div>
<div class="chk" style="left:14px;top:459px"></div>
<div class="cell" style="left:-39.5px;width:200px;text-align:center;top:457px;font-size:14px;margin-top:-1px">13</div>
<div class="cell" style="left:95px;top:457px">2022<span class="c">工会</span></div>
<div class="cell" style="left:352px;width:200px;text-align:center;top:457px"><span class="c">季</span></div>
<div class="cell" style="left:459px;width:200px;text-align:center;top:457px"><span class="c">未取票</span></div>
<div class="cell" style="left:555px;width:200px;text-align:center;top:457px;font-size:14px;margin-top:-1px">0</div>
<div class="cell" style="left:630px;width:200px;text-align:right;top:457px;font-size:14px;margin-top:-1px">0</div>
<div class="cell" style="left:765px;width:200px;text-align:right;top:457px;font-size:14px;margin-top:-1px">0</div>
<div class="cell" style="left:920px;width:200px;text-align:center;top:457px"><span class="c">未取票</span></div>
<div class="cell" style="left:1016px;width:200px;text-align:center;top:457px;font-size:14px;margin-top:-1px">0</div>
<div class="cell" style="left:1091px;width:200px;text-align:right;top:457px;font-size:14px;margin-top:-1px">0</div>
<div class="cell" style="left:1226px;width:200px;text-align:right;top:457px;font-size:14px;margin-top:-1px">0</div>
<div class="cell" style="left:1361px;width:200px;text-align:right;top:457px;font-size:14px;margin-top:-1px;text-decoration:underline">0</div>
<div class="bl" style="left:40px;top:0;width:1px;height:481px"></div>
<div class="bl" style="left:80px;top:0;width:1px;height:481px"></div>
<div class="bl" style="left:395px;top:0;width:1px;height:481px"></div>
<div class="bl" style="left:508px;top:0;width:1px;height:481px"></div>
<div class="bl" style="left:609px;top:0;width:1px;height:481px"></div>
<div class="bl" style="left:699px;top:0;width:1px;height:481px"></div>
<div class="bl" style="left:834px;top:0;width:1px;height:481px"></div>
<div class="bl" style="left:969px;top:0;width:1px;height:481px"></div>
<div class="bl" style="left:1070px;top:0;width:1px;height:481px"></div>
<div class="bl" style="left:1160px;top:0;width:1px;height:481px"></div>
<div class="bl" style="left:1295px;top:0;width:1px;height:481px"></div>
<div class="bl" style="left:1430px;top:0;width:1px;height:481px"></div>
<div class="bl" style="left:1565px;top:0;width:1px;height:481px"></div>
<div class="bl" style="left:0;top:0;width:1px;height:481px"></div>
<div class="a" style="left:1609px;top:0;width:10px;height:481px;background:linear-gradient(to right,rgba(0,0,0,0),rgba(0,0,0,0.055))"></div>
<div class="a" style="left:1619px;top:0;width:113px;height:334px;background:#fff"></div>
<div class="a" style="left:1646px;top:11px;height:17px"><svg width="16" height="17" viewBox="0 0 16 17"><path d="M1.5 9.1L10.3 0.3A2.4 2.4 0 0 1 13.7 3.7L4.9 12.5Q2.6 13.6 1.8 12.7Q1 11.6 1.5 9.1Z" fill="none" stroke="#3a3a3a" stroke-width="1.15" stroke-linejoin="round"/><path d="M8 2.6l3.4 3.4" stroke="#3a3a3a" stroke-width="1.1"/><rect x="1.1" y="14" width="13.9" height="1.7" fill="#4a4a4a"/></svg></div>
<div class="a" style="left:1689px;top:11px;height:17px"><svg width="16" height="17" viewBox="0 0 16 17"><path d="M13.9 4.6V4.2a3 3 0 0 0-3-3H4.1a3 3 0 0 0-3 3v8.2a3 3 0 0 0 3 3H8.6" fill="none" stroke="#3a3a3a" stroke-width="1.15"/><path d="M13.9 6.4V11" stroke="#3a3a3a" stroke-width="1.15"/><path d="M3.5 5.4h7.5M3.5 7.6h3.2" stroke="#3a3a3a" stroke-width="1"/><circle cx="9.6" cy="10.4" r="2.3" fill="none" stroke="#3a3a3a" stroke-width="1.15"/><path d="M11.3 12.2l2 2.4" stroke="#3a3a3a" stroke-width="1.2"/></svg></div>
<div class="bl" style="left:1619px;top:37px;width:113px;height:1px"></div>
<div class="a" style="left:1646px;top:48px;height:17px"><svg width="16" height="17" viewBox="0 0 16 17"><path d="M1.5 9.1L10.3 0.3A2.4 2.4 0 0 1 13.7 3.7L4.9 12.5Q2.6 13.6 1.8 12.7Q1 11.6 1.5 9.1Z" fill="none" stroke="#3a3a3a" stroke-width="1.15" stroke-linejoin="round"/><path d="M8 2.6l3.4 3.4" stroke="#3a3a3a" stroke-width="1.1"/><rect x="1.1" y="14" width="13.9" height="1.7" fill="#4a4a4a"/></svg></div>
<div class="a" style="left:1689px;top:48px;height:17px"><svg width="16" height="17" viewBox="0 0 16 17"><path d="M13.9 4.6V4.2a3 3 0 0 0-3-3H4.1a3 3 0 0 0-3 3v8.2a3 3 0 0 0 3 3H8.6" fill="none" stroke="#3a3a3a" stroke-width="1.15"/><path d="M13.9 6.4V11" stroke="#3a3a3a" stroke-width="1.15"/><path d="M3.5 5.4h7.5M3.5 7.6h3.2" stroke="#3a3a3a" stroke-width="1"/><circle cx="9.6" cy="10.4" r="2.3" fill="none" stroke="#3a3a3a" stroke-width="1.15"/><path d="M11.3 12.2l2 2.4" stroke="#3a3a3a" stroke-width="1.2"/></svg></div>
<div class="bl" style="left:1619px;top:74px;width:113px;height:1px"></div>
<div class="a" style="left:1646px;top:85px;height:17px"><svg width="16" height="17" viewBox="0 0 16 17"><path d="M1.5 9.1L10.3 0.3A2.4 2.4 0 0 1 13.7 3.7L4.9 12.5Q2.6 13.6 1.8 12.7Q1 11.6 1.5 9.1Z" fill="none" stroke="#3a3a3a" stroke-width="1.15" stroke-linejoin="round"/><path d="M8 2.6l3.4 3.4" stroke="#3a3a3a" stroke-width="1.1"/><rect x="1.1" y="14" width="13.9" height="1.7" fill="#4a4a4a"/></svg></div>
<div class="a" style="left:1689px;top:85px;height:17px"><svg width="16" height="17" viewBox="0 0 16 17"><path d="M13.9 4.6V4.2a3 3 0 0 0-3-3H4.1a3 3 0 0 0-3 3v8.2a3 3 0 0 0 3 3H8.6" fill="none" stroke="#3a3a3a" stroke-width="1.15"/><path d="M13.9 6.4V11" stroke="#3a3a3a" stroke-width="1.15"/><path d="M3.5 5.4h7.5M3.5 7.6h3.2" stroke="#3a3a3a" stroke-width="1"/><circle cx="9.6" cy="10.4" r="2.3" fill="none" stroke="#3a3a3a" stroke-width="1.15"/><path d="M11.3 12.2l2 2.4" stroke="#3a3a3a" stroke-width="1.2"/></svg></div>
<div class="bl" style="left:1619px;top:111px;width:113px;height:1px"></div>
<div class="a" style="left:1646px;top:122px;height:17px"><svg width="16" height="17" viewBox="0 0 16 17"><path d="M1.5 9.1L10.3 0.3A2.4 2.4 0 0 1 13.7 3.7L4.9 12.5Q2.6 13.6 1.8 12.7Q1 11.6 1.5 9.1Z" fill="none" stroke="#3a3a3a" stroke-width="1.15" stroke-linejoin="round"/><path d="M8 2.6l3.4 3.4" stroke="#3a3a3a" stroke-width="1.1"/><rect x="1.1" y="14" width="13.9" height="1.7" fill="#4a4a4a"/></svg></div>
<div class="a" style="left:1689px;top:122px;height:17px"><svg width="16" height="17" viewBox="0 0 16 17"><path d="M13.9 4.6V4.2a3 3 0 0 0-3-3H4.1a3 3 0 0 0-3 3v8.2a3 3 0 0 0 3 3H8.6" fill="none" stroke="#3a3a3a" stroke-width="1.15"/><path d="M13.9 6.4V11" stroke="#3a3a3a" stroke-width="1.15"/><path d="M3.5 5.4h7.5M3.5 7.6h3.2" stroke="#3a3a3a" stroke-width="1"/><circle cx="9.6" cy="10.4" r="2.3" fill="none" stroke="#3a3a3a" stroke-width="1.15"/><path d="M11.3 12.2l2 2.4" stroke="#3a3a3a" stroke-width="1.2"/></svg></div>
<div class="bl" style="left:1619px;top:148px;width:113px;height:1px"></div>
<div class="a" style="left:1646px;top:159px;height:17px"><svg width="16" height="17" viewBox="0 0 16 17"><path d="M1.5 9.1L10.3 0.3A2.4 2.4 0 0 1 13.7 3.7L4.9 12.5Q2.6 13.6 1.8 12.7Q1 11.6 1.5 9.1Z" fill="none" stroke="#3a3a3a" stroke-width="1.15" stroke-linejoin="round"/><path d="M8 2.6l3.4 3.4" stroke="#3a3a3a" stroke-width="1.1"/><rect x="1.1" y="14" width="13.9" height="1.7" fill="#4a4a4a"/></svg></div>
<div class="a" style="left:1689px;top:159px;height:17px"><svg width="16" height="17" viewBox="0 0 16 17"><path d="M13.9 4.6V4.2a3 3 0 0 0-3-3H4.1a3 3 0 0 0-3 3v8.2a3 3 0 0 0 3 3H8.6" fill="none" stroke="#3a3a3a" stroke-width="1.15"/><path d="M13.9 6.4V11" stroke="#3a3a3a" stroke-width="1.15"/><path d="M3.5 5.4h7.5M3.5 7.6h3.2" stroke="#3a3a3a" stroke-width="1"/><circle cx="9.6" cy="10.4" r="2.3" fill="none" stroke="#3a3a3a" stroke-width="1.15"/><path d="M11.3 12.2l2 2.4" stroke="#3a3a3a" stroke-width="1.2"/></svg></div>
<div class="bl" style="left:1619px;top:185px;width:113px;height:1px"></div>
<div class="a" style="left:1646px;top:196px;height:17px"><svg width="16" height="17" viewBox="0 0 16 17"><path d="M1.5 9.1L10.3 0.3A2.4 2.4 0 0 1 13.7 3.7L4.9 12.5Q2.6 13.6 1.8 12.7Q1 11.6 1.5 9.1Z" fill="none" stroke="#3a3a3a" stroke-width="1.15" stroke-linejoin="round"/><path d="M8 2.6l3.4 3.4" stroke="#3a3a3a" stroke-width="1.1"/><rect x="1.1" y="14" width="13.9" height="1.7" fill="#4a4a4a"/></svg></div>
<div class="a" style="left:1689px;top:196px;height:17px"><svg width="16" height="17" viewBox="0 0 16 17"><path d="M13.9 4.6V4.2a3 3 0 0 0-3-3H4.1a3 3 0 0 0-3 3v8.2a3 3 0 0 0 3 3H8.6" fill="none" stroke="#3a3a3a" stroke-width="1.15"/><path d="M13.9 6.4V11" stroke="#3a3a3a" stroke-width="1.15"/><path d="M3.5 5.4h7.5M3.5 7.6h3.2" stroke="#3a3a3a" stroke-width="1"/><circle cx="9.6" cy="10.4" r="2.3" fill="none" stroke="#3a3a3a" stroke-width="1.15"/><path d="M11.3 12.2l2 2.4" stroke="#3a3a3a" stroke-width="1.2"/></svg></div>
<div class="bl" style="left:1619px;top:222px;width:113px;height:1px"></div>
<div class="a" style="left:1646px;top:233px;height:17px"><svg width="16" height="17" viewBox="0 0 16 17"><path d="M1.5 9.1L10.3 0.3A2.4 2.4 0 0 1 13.7 3.7L4.9 12.5Q2.6 13.6 1.8 12.7Q1 11.6 1.5 9.1Z" fill="none" stroke="#3a3a3a" stroke-width="1.15" stroke-linejoin="round"/><path d="M8 2.6l3.4 3.4" stroke="#3a3a3a" stroke-width="1.1"/><rect x="1.1" y="14" width="13.9" height="1.7" fill="#4a4a4a"/></svg></div>
<div class="a" style="left:1689px;top:233px;height:17px"><svg width="16" height="17" viewBox="0 0 16 17"><path d="M13.9 4.6V4.2a3 3 0 0 0-3-3H4.1a3 3 0 0 0-3 3v8.2a3 3 0 0 0 3 3H8.6" fill="none" stroke="#3a3a3a" stroke-width="1.15"/><path d="M13.9 6.4V11" stroke="#3a3a3a" stroke-width="1.15"/><path d="M3.5 5.4h7.5M3.5 7.6h3.2" stroke="#3a3a3a" stroke-width="1"/><circle cx="9.6" cy="10.4" r="2.3" fill="none" stroke="#3a3a3a" stroke-width="1.15"/><path d="M11.3 12.2l2 2.4" stroke="#3a3a3a" stroke-width="1.2"/></svg></div>
<div class="bl" style="left:1619px;top:259px;width:113px;height:1px"></div>
<div class="a" style="left:1646px;top:270px;height:17px"><svg width="16" height="17" viewBox="0 0 16 17"><path d="M1.5 9.1L10.3 0.3A2.4 2.4 0 0 1 13.7 3.7L4.9 12.5Q2.6 13.6 1.8 12.7Q1 11.6 1.5 9.1Z" fill="none" stroke="#3a3a3a" stroke-width="1.15" stroke-linejoin="round"/><path d="M8 2.6l3.4 3.4" stroke="#3a3a3a" stroke-width="1.1"/><rect x="1.1" y="14" width="13.9" height="1.7" fill="#4a4a4a"/></svg></div>
<div class="a" style="left:1689px;top:270px;height:17px"><svg width="16" height="17" viewBox="0 0 16 17"><path d="M13.9 4.6V4.2a3 3 0 0 0-3-3H4.1a3 3 0 0 0-3 3v8.2a3 3 0 0 0 3 3H8.6" fill="none" stroke="#3a3a3a" stroke-width="1.15"/><path d="M13.9 6.4V11" stroke="#3a3a3a" stroke-width="1.15"/><path d="M3.5 5.4h7.5M3.5 7.6h3.2" stroke="#3a3a3a" stroke-width="1"/><circle cx="9.6" cy="10.4" r="2.3" fill="none" stroke="#3a3a3a" stroke-width="1.15"/><path d="M11.3 12.2l2 2.4" stroke="#3a3a3a" stroke-width="1.2"/></svg></div>
<div class="bl" style="left:1619px;top:296px;width:113px;height:1px"></div>
<div class="a" style="left:1646px;top:307px;height:17px"><svg width="16" height="17" viewBox="0 0 16 17"><path d="M1.5 9.1L10.3 0.3A2.4 2.4 0 0 1 13.7 3.7L4.9 12.5Q2.6 13.6 1.8 12.7Q1 11.6 1.5 9.1Z" fill="none" stroke="#3a3a3a" stroke-width="1.15" stroke-linejoin="round"/><path d="M8 2.6l3.4 3.4" stroke="#3a3a3a" stroke-width="1.1"/><rect x="1.1" y="14" width="13.9" height="1.7" fill="#4a4a4a"/></svg></div>
<div class="a" style="left:1689px;top:307px;height:17px"><svg width="16" height="17" viewBox="0 0 16 17"><path d="M13.9 4.6V4.2a3 3 0 0 0-3-3H4.1a3 3 0 0 0-3 3v8.2a3 3 0 0 0 3 3H8.6" fill="none" stroke="#3a3a3a" stroke-width="1.15"/><path d="M13.9 6.4V11" stroke="#3a3a3a" stroke-width="1.15"/><path d="M3.5 5.4h7.5M3.5 7.6h3.2" stroke="#3a3a3a" stroke-width="1"/><circle cx="9.6" cy="10.4" r="2.3" fill="none" stroke="#3a3a3a" stroke-width="1.15"/><path d="M11.3 12.2l2 2.4" stroke="#3a3a3a" stroke-width="1.2"/></svg></div>
<div class="bl" style="left:1619px;top:333px;width:113px;height:1px"></div>
<div class="bl" style="left:1731px;top:0;width:1px;height:481px"></div>
</div>
<div class="a" style="left:1850px;top:299px;width:25px;height:343px;background:#f1f1f1"></div>
<svg class="a" style="left:1856px;top:309px" width="13" height="8" viewBox="0 0 13 8"><path d="M1 7.5L6.5 1 12 7.5z" fill="#a3a3a3"/></svg>
<div class="a" style="left:1852px;top:325px;width:21px;height:185px;background:#c1c1c1"></div>
<div class="a" style="left:118px;top:780px;width:1757px;height:26px;background:#f1f1f1"></div>
<svg class="a" style="left:126px;top:786px" width="8" height="13" viewBox="0 0 8 13"><path d="M7.5 1L1 6.5 7.5 12z" fill="#a3a3a3"/></svg>
<div class="a" style="left:143px;top:782px;width:1680px;height:21px;background:#c1c1c1"></div>
<svg class="a" style="left:117px;top:818px" width="15" height="15" viewBox="0 0 15 15"><circle cx="7.5" cy="7.5" r="6.5" fill="none" stroke="#fd9739" stroke-width="1.2"/><path d="M7.5 3.8v4.8" stroke="#fd9739" stroke-width="1.4"/><circle cx="7.5" cy="10.7" r="0.8" fill="#fd9739"/></svg>
<div class="a" style="left:137px;top:817px;font-size:14px;line-height:18px;color:#fd9739">税务政策</div>
<div class="a" style="left:1427px;top:818px;font-size:13px;line-height:18px;color:#333;letter-spacing:0.6px">共92条记录</div>
<svg class="a" style="left:1513px;top:819px" width="10" height="14" viewBox="0 0 10 14"><path d="M8 1.5L2.5 7 8 12.5" fill="none" stroke="#bbb" stroke-width="1.2"/></svg>
<div class="a" style="left:1532px;top:812px;width:27px;height:27px;border:1px solid #50c8cc;border-radius:2px"></div>
<div class="a" style="left:1669px;top:812px;width:89px;height:27px;border:1px solid #dcdcdc;border-radius:2px"></div>
<div class="a" style="left:1803px;top:812px;width:50px;height:27px;border:1px solid #dcdcdc;border-radius:2px"></div>
<div class="a" style="left:1538px;top:642px;width:359px;height:191px;background:#fff;border-radius:4px 0 0 0;box-shadow:0 1px 8px rgba(0,0,0,0.16);overflow:hidden">
<svg class="a" style="left:0;top:0" width="337" height="191" viewBox="0 0 337 191"><path d="M-24 0H60L26.5 33.5Q18 42 9.5 33.5Z" fill="rgba(160,222,235,0.3)"/><path d="M20 0H83L58.5 24.5Q51.5 31.5 44.5 24.5Z" fill="rgba(160,222,235,0.3)"/><path d="M199.5 31L234 -2" stroke="#e3f5f9" stroke-width="3.2" stroke-linecap="round"/><path d="M241 0H264L244 20Q241.5 22.5 239 20L233 14Q230.5 11.5 233 9Z" fill="#e3f5f9"/><path d="M308 191Q316 177 337 178V191Z" fill="#e3f5f9"/></svg>
<svg class="a" style="left:313px;top:11px" width="11" height="10" viewBox="0 0 11 10"><path d="M1 0.5l9 9M10 0.5l-9 9" stroke="#8a8a8a" stroke-width="1"/></svg>
<div class="a" style="left:22px;top:38.5px;font-size:13px;letter-spacing:0.8px;line-height:21.4px;color:#333;white-space:nowrap">河北税务数字账户升级影响通知<br>尊敬的用户：<br>受河北电子税务局刚升级税务数字账户模块不稳定<br>的影响，无盘取票功能也受较大影响，在此期间税<br>务数字账户取票（原无盘取票）任务可能无法正常<br>采集完成，已发起的任务我们会根据升级的影响范<br>围，重新执行成功或失败提示返回；我们也会结合</div>
<div class="a" style="left:337px;top:0;width:22px;height:191px;background:#f1f1f1"></div>
<svg class="a" style="left:341.5px;top:10px" width="12" height="7" viewBox="0 0 12 7"><path d="M0.2 6.6L6 0.2 11.8 6.6z" fill="#505050"/></svg>
<div class="a" style="left:337.5px;top:25px;width:20.5px;height:99px;background:#c1c1c1"></div>
<svg class="a" style="left:341.5px;top:174.5px" width="12" height="7" viewBox="0 0 12 7"><path d="M0.2 0.2L6 6.6 11.8 0.2z" fill="#505050"/></svg>
</div>
</body></html>
